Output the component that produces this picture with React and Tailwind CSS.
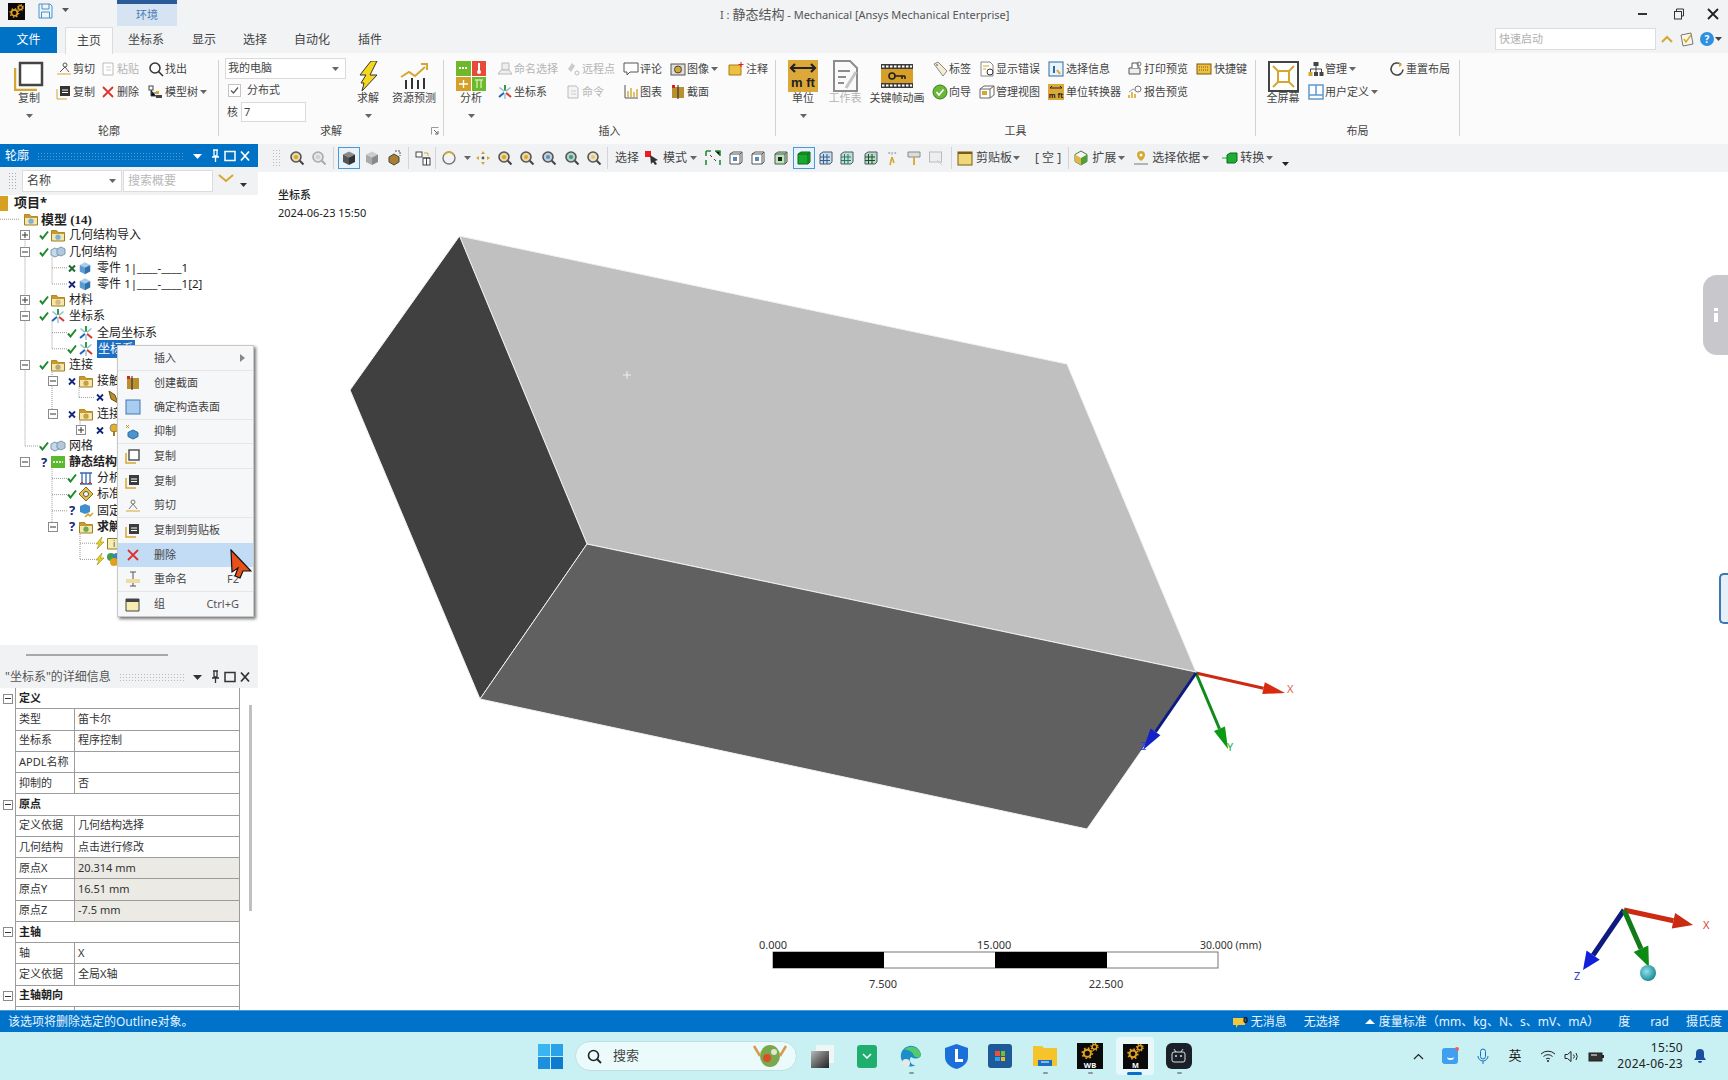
import React from 'react';

const S = ({ w = 16, h = 16, vb = '0 0 16 16', children }) => (
  <svg width={w} height={h} viewBox={vb} className="block shrink-0">{children}</svg>
);

const Caret = ({ c = '#666' }) => (
  <svg width="7" height="4" viewBox="0 0 7 4" className="block shrink-0"><path d="M0 0h7L3.5 4z" fill={c} /></svg>
);

// gears used by the app logo and the taskbar tiles
const Gears = ({ size = 18, letter }) => (
  <svg width={size} height={size} viewBox="0 0 24 24" className="block shrink-0">
    <rect width="24" height="24" fill="#0a0a0a" />
    <g transform={letter ? 'translate(2.5 -1.5) scale(.78)' : undefined}>
      <circle cx="9" cy="14" r="4.2" fill="none" stroke="#e0a020" strokeWidth="2.4" />
      <circle cx="9" cy="14" r="6" fill="none" stroke="#e0a020" strokeWidth="2" strokeDasharray="2 2.7" />
      <circle cx="17.5" cy="6.5" r="2.8" fill="none" stroke="#e0a020" strokeWidth="1.8" />
      <circle cx="17.5" cy="6.5" r="4.2" fill="none" stroke="#e0a020" strokeWidth="1.5" strokeDasharray="1.5 1.8" />
    </g>
    {letter && <text x="12" y="23" fontSize="7" fill="#fff" textAnchor="middle" fontWeight="700">{letter}</text>}
  </svg>
);

const CubeI = ({ t = '#a9cdea', l = '#5b9bd0', r = '#2f73ad', s = 16 }) => (
  <S w={s} h={s}>
    <path d="M8 1.5l6 3-6 3-6-3z" fill={t} />
    <path d="M2 4.5l6 3V15l-6-3z" fill={l} />
    <path d="M14 4.5l-6 3V15l6-3z" fill={r} />
  </S>
);

const Mag = ({ c = '#d9a520', dim }) => (
  <S>
    <circle cx="7" cy="7" r="5" fill={c} fillOpacity=".35" stroke={dim ? '#aaa' : '#555'} strokeWidth="1.6" />
    <circle cx="7" cy="7" r="2" fill={c} />
    <path d="M10.8 10.8L14.5 14.5" stroke={dim ? '#aaa' : '#444'} strokeWidth="2" />
  </S>
);

const Coord = () => (
  <S>
    <path d="M8 8L2.5 3.5M8 8l5.5-4.5" stroke="#8fbfd8" strokeWidth="1.6" />
    <path d="M8 8V1" stroke="#2e9e3e" strokeWidth="2" />
    <path d="M8 8l6 5" stroke="#d83a2a" strokeWidth="2" />
    <path d="M8 8l-6 5" stroke="#2563b8" strokeWidth="2" />
    <path d="M8 8v7" stroke="#8fbfd8" strokeWidth="1.4" />
    <circle cx="8" cy="8" r="1.5" fill="#fff" />
  </S>
);

const Folder = ({ c = '#7fb0d8' }) => (
  <S>
    <path d="M1.5 3.5h5l1.5 2h6.5V14h-13z" fill="#f3e7ad" stroke="#9a7c22" />
    <path d="M1.5 3.5h5l1.5 2h6.5v1.5h-13z" fill="#c89a2c" />
    <circle cx="8" cy="10.2" r="2.6" fill={c} />
  </S>
);

const Cubes = () => (
  <S>
    <path d="M1 6l4-2 4 2v5l-4 2-4-2z" fill="#c5d9ea" stroke="#7a98b2" />
    <path d="M7 5l4-2 4 2v5l-4 2-4-2z" fill="#b3c8da" stroke="#7a98b2" />
  </S>
);

const Mark = ({ m }) => {
  if (m === 'c') return <S w={10} h={10} vb="0 0 10 10"><path d="M1 5.5l2.5 3L9 1.5" fill="none" stroke="#1d8a2e" strokeWidth="2" /></S>;
  if (m === 'x') return <S w={10} h={10} vb="0 0 10 10"><path d="M2 2.5l6 6M8 2.5l-6 6" stroke="#14267e" strokeWidth="1.8" /></S>;
  if (m === 'cx') return <S w={10} h={10} vb="0 0 10 10"><path d="M2 2.5l6 6M8 2.5l-6 6" stroke="#1d6a2e" strokeWidth="2" /></S>;
  if (m === 'b') return <S w={10} h={12} vb="0 0 10 12"><path d="M7 0L1 7h3l-2 5 7-7H5.5z" fill="#e8d020" stroke="#8a7a10" strokeWidth=".5" /></S>;
  if (m === 'q') return <span className="block w-[10px] text-center text-[13px] leading-none font-bold text-[#14267e]">?</span>;
  return <span className="block w-[10px]" />;
};

const Exp = ({ e }) => {
  if (!e) return <span className="block w-[10px]" />;
  return (
    <span className="flex h-[10px] w-[10px] items-center justify-center border border-[#8a8a8a] bg-white">
      <svg width="8" height="8" viewBox="0 0 8 8" className="block">
        <path d={e === '+' ? 'M1 4h6M4 1v6' : 'M1 4h6'} stroke="#333" />
      </svg>
    </span>
  );
};

const INDENT = { 1: 'ml-[20px]', 2: 'ml-[48px]', 3: 'ml-[76px]' };

const P1 = <span className="text-[11.5px]">1|____-____1</span>;
const P2 = <span className="text-[11.5px]">1|____-____1[2]</span>;

const TREE = [
  { lv: 1, e: '+', m: 'c', ic: <Folder />, t: '几何结构导入' },
  { lv: 1, e: '-', m: 'c', ic: <Cubes />, t: '几何结构' },
  { lv: 2, m: 'cx', ic: <CubeI s={14} />, t: <>零件 {P1}</> },
  { lv: 2, m: 'x', ic: <CubeI s={14} />, t: <>零件 {P2}</> },
  { lv: 1, e: '+', m: 'c', ic: <Folder c="#d8b880" />, t: '材料' },
  { lv: 1, e: '-', m: 'c', ic: <Coord />, t: '坐标系' },
  { lv: 2, m: 'c', ic: <Coord />, t: '全局坐标系' },
  { lv: 2, m: 'c', ic: <Coord />, t: '坐标系', sel: true },
  { lv: 1, e: '-', m: 'c', ic: <Folder c="#b8a878" />, t: '连接' },
  { lv: 2, e: '-', m: 'x', ic: <Folder c="#c8a040" />, t: '接触' },
  { lv: 3, m: 'x', ic: <S><path d="M3 2l6 4 3 8-7-4z" fill="#b89030" stroke="#6a5010" /></S>, t: '' },
  { lv: 2, e: '-', m: 'x', ic: <Folder c="#c8a040" />, t: '连接' },
  { lv: 3, e: '+', m: 'x', ic: <S><circle cx="8" cy="6" r="4" fill="#e8b020" stroke="#888" /><path d="M8 9v5" stroke="#a08020" strokeWidth="2" /></S>, t: '' },
  { lv: 1, m: 'c', ic: <Cubes />, t: '网格' },
  { lv: 1, e: '-', m: 'q', ic: <S><rect x="1" y="2" width="14" height="12" fill="#5cb82e" /><path d="M3 8h10" stroke="#fff" strokeWidth="1.5" strokeDasharray="2 1" /></S>, t: '静态结构', b: true },
  { lv: 2, m: 'c', ic: <S><path d="M2 3h12M2 14h12M4 3v11M8 3v11M12 3v11" stroke="#3a6ab0" strokeWidth="1.3" /><path d="M2 14l2-2 2 2M10 14l2-2 2 2" stroke="#d03020" fill="none" /></S>, t: '分析设置' },
  { lv: 2, m: 'c', ic: <S><path d="M8 1l7 7-7 7-7-7z" fill="#e4bf50" stroke="#8a6a10" /><circle cx="8" cy="8" r="2.5" fill="#fff" stroke="#555" /></S>, t: '标准地球重力' },
  { lv: 2, m: 'q', ic: <S><path d="M2 3l5-2 5 2v6l-5 2-5-2z" fill="#3f8fd0" /><path d="M7 14l3-3 2 2 3-3" stroke="#d0a020" strokeWidth="1.5" fill="none" /></S>, t: '固定支撑' },
  { lv: 2, e: '-', m: 'q', ic: <Folder c="#6aaa50" />, t: '求解', b: true },
  { lv: 3, m: 'b', ic: <S><path d="M1.5 3.5h13V14h-13z" fill="#f6eeb0" stroke="#8a7c22" /><text x="8" y="12" fontSize="8" textAnchor="middle" fill="#336">i</text></S>, t: '' },
  { lv: 3, m: 'b', ic: <S><circle cx="5" cy="6" r="4" fill="#3aa04a" /><circle cx="11" cy="6" r="4" fill="#3a80c8" /><circle cx="8" cy="11" r="4" fill="#e0a020" /></S>, t: '' },
];

const rowY = (i) => 8 + 16.2 * i;

// dotted tree connectors, coordinates relative to the tree area
const Lines = () => {
  const d = [
    [25, rowY(2), 25, rowY(15)],
    [0, rowY(1), 20, rowY(1)],
    [52, rowY(3) + 5, 52, rowY(5)],
    [52, rowY(4), 68, rowY(4)],
    [52, rowY(5), 68, rowY(5)],
    [52, rowY(7) + 5, 52, rowY(9)],
    [52, rowY(8), 68, rowY(8)],
    [52, rowY(9), 68, rowY(9)],
    [52, rowY(10) + 5, 52, rowY(13)],
    [79, rowY(11) + 5, 79, rowY(12)],
    [79, rowY(12), 95, rowY(12)],
    [80, rowY(13) + 5, 80, rowY(14)],
    [52, rowY(16) + 5, 52, rowY(20)],
    [52, rowY(17), 68, rowY(17)],
    [52, rowY(18), 68, rowY(18)],
    [52, rowY(19), 68, rowY(19)],
    [80, rowY(20) + 5, 80, rowY(22)],
    [80, rowY(21), 95, rowY(21)],
    [80, rowY(22), 95, rowY(22)],
    [25, rowY(15), 40, rowY(15)],
  ];
  return (
    <svg width="258" height="450" className="pointer-events-none absolute left-0 top-0">
      {d.map((l, i) => (
        <line key={i} x1={l[0]} y1={l[1]} x2={l[2]} y2={l[3]} stroke="#9a9a9a" strokeDasharray="1 1" />
      ))}
    </svg>
  );
};

const MENU = [
  { t: '插入', arrow: true, sep: true },
  { t: '创建截面', ic: <S><rect x="2" y="3" width="12" height="11" fill="#b89030" /><path d="M7 1v14" stroke="#222" /><rect x="2" y="1" width="3" height="3" fill="#e02020" /></S> },
  { t: '确定构造表面', ic: <S><rect x="1" y="1" width="14" height="14" fill="#a9cdf0" stroke="#4078b0" /></S>, sep: true },
  { t: '抑制', ic: <S><path d="M8 6l5 2.5v4L8 15l-5-2.5v-4z" fill="#4f94cf" stroke="#2a6aa0" /><path d="M1 1l3 3M4 1L1 4" stroke="#c8941e" /></S>, sep: true },
  { t: '复制', ic: <S><path d="M1 5v10h10" fill="none" stroke="#d6a730" strokeWidth="1.5" /><rect x="4" y="2" width="10" height="10" fill="#fff" stroke="#555" strokeWidth="1.5" /></S>, sep: true },
  { t: '复制', ic: <S><path d="M1 5v10h10" fill="none" stroke="#d6a730" strokeWidth="1.5" /><rect x="4" y="2" width="10" height="10" fill="#3c3c3c" /><path d="M6 6h6M6 8.5h6" stroke="#fff" /></S> },
  { t: '剪切', ic: <S><circle cx="8" cy="5" r="2" fill="none" stroke="#777" /><path d="M8 7l-4 5M8 7l4 5" stroke="#777" /><path d="M1 14h14" stroke="#d6a730" /></S>, sep: true },
  { t: '复制到剪贴板', ic: <S><path d="M1 5v10h10" fill="none" stroke="#d6a730" strokeWidth="1.5" /><rect x="4" y="2" width="10" height="10" fill="#3c3c3c" /><path d="M6 6h6M6 8.5h6" stroke="#fff" /></S> },
  { t: '删除', hl: true, ic: <S><path d="M3 3l10 10M13 3L3 13" stroke="#e0312a" strokeWidth="1.8" /></S> },
  { t: '重命名', key: 'F2', ic: <S><path d="M8 1v14M5 1h6M5 15h6" stroke="#555" /><path d="M1 8h14v4H1z" fill="#f0dca0" /></S>, sep: true },
  { t: '组', key: 'Ctrl+G', ic: <S><path d="M1 3h13v12H1z" fill="#f5eeb0" stroke="#444" /><path d="M1 3h13v3H1z" fill="#444" /></S> },
];

const ContextMenu = () => (
  <div className="absolute left-[117px] top-[150px] h-[272px] w-[137px] border border-[#c8c8c8] bg-[#f6f7f8] shadow-[2px_2px_3px_#777]">
    {MENU.map((it, i) => (
      <div key={i} className={`flex h-[24.6px] items-center pl-[7px] pr-[14px] text-[11px] text-[#444] ${it.hl ? 'bg-[#c3dcf5]' : ''} ${it.sep ? 'border-b border-[#e6e6e6]' : ''}`}>
        <span className="flex w-[29px] shrink-0">{it.ic}</span>
        <span>{it.t}</span>
        {it.key && <span className="ml-auto text-[#555]">{it.key}</span>}
        {it.arrow && <svg width="5" height="8" viewBox="0 0 5 8" className="ml-auto -mr-[6px]"><path d="M0 0l5 4-5 4z" fill="#888" /></svg>}
      </div>
    ))}
  </div>
);

const PanelButtons = ({ c }) => (
  <svg width="58" height="14" viewBox="0 0 58 14" className="block shrink-0" fill="none" stroke={c}>
    <path d="M0 5h9L4.5 10z" fill={c} stroke="none" />
    <path d="M20 1h5M21 1v6h3V1M19 8h7M22.5 8v5" strokeWidth="1.3" />
    <rect x="32" y="2.5" width="10" height="9" strokeWidth="1.5" />
    <path d="M48 2.5l8 9M56 2.5l-8 9" strokeWidth="1.8" />
  </svg>
);

const OutlinePanel = () => (
  <>
    <div className="flex h-[23px] items-center bg-[#0072c6] pl-[5px] pr-[7px] text-[12px] text-white">
      <span>轮廓</span>
      <span className="mx-[8px] h-[8px] flex-1 bg-[radial-gradient(circle,#ffffff_0.6px,transparent_0.7px)] bg-[length:3px_3px] opacity-30" />
      <PanelButtons c="#ffffff" />
    </div>
    <div className="flex h-[28px] items-center bg-[#f1f2f4] pl-[8px]">
      <span className="h-[18px] w-[9px] bg-[radial-gradient(circle,#aaa_0.7px,transparent_0.8px)] bg-[length:3px_3px]" />
      <div className="ml-[5px] flex h-[22px] w-[100px] items-center justify-between border border-[#dcdcdc] bg-white pl-[4px] pr-[5px] text-[12px] text-[#444]">
        名称<Caret />
      </div>
      <div className="ml-[1px] flex h-[22px] w-[90px] items-center border border-[#dcdcdc] bg-white pl-[4px] text-[12px] text-[#b8b8b8]">搜索概要</div>
      <svg width="16" height="10" viewBox="0 0 16 10" className="ml-[5px] -mt-[6px] block"><path d="M1 2l7 6 7-6" fill="none" stroke="#d6a730" strokeWidth="2" /></svg>
      <span className="ml-[6px] mt-[8px]"><Caret c="#333" /></span>
    </div>
    <div className="relative h-[450px] bg-white text-[12px] text-[#222]">
      <Lines />
      <div className="relative flex h-[16.2px] items-center">
        <span className="h-[15px] w-[8px] bg-[#d6a020]" />
        <span className="ml-[6px] text-[13px] font-bold">项目*</span>
      </div>
      <div className="relative flex h-[16.2px] items-center pl-[23px]">
        <Folder />
        <span className="ml-[2px] font-['Liberation_Serif','Noto_Sans_CJK_SC',serif] text-[13px] font-bold">模型 (14)</span>
      </div>
      {TREE.map((r, i) => (
        <div key={i} className="relative flex h-[16.2px] items-center whitespace-nowrap">
          <span className={INDENT[r.lv]}><Exp e={r.e} /></span>
          <span className="ml-[9px] w-[11px]"><Mark m={r.m} /></span>
          <span className="w-[16px]">{r.ic}</span>
          <span className={`ml-[3px] ${r.b ? 'font-bold' : ''} ${r.sel ? 'bg-[#1c6fc4] px-[1px] text-white' : ''}`}>{r.t}</span>
        </div>
      ))}
      <ContextMenu />
      <svg width="24" height="30" viewBox="0 0 24 30" className="absolute left-[228px] top-[354px] block">
        <path d="M3 1l20 21-8 0-3 7-5-2 3-8-6 4z" fill="#e8521a" stroke="#111" strokeWidth="1.2" />
      </svg>
    </div>
    <div className="flex h-[20px] items-center bg-[#f1f2f4] pl-[26px]">
      <span className="h-[2px] w-[142px] bg-[#a8a8a8]" />
    </div>
  </>
);

const DETAILS = [
  { g: '定义' },
  { k: '类型', v: '笛卡尔' },
  { k: '坐标系', v: '程序控制' },
  { k: 'APDL名称', v: '' },
  { k: '抑制的', v: '否' },
  { g: '原点' },
  { k: '定义依据', v: '几何结构选择' },
  { k: '几何结构', v: '点击进行修改' },
  { k: '原点X', v: '20.314 mm', shade: true },
  { k: '原点Y', v: '16.51 mm', shade: true },
  { k: '原点Z', v: '-7.5 mm', shade: true },
  { g: '主轴' },
  { k: '轴', v: 'X' },
  { k: '定义依据', v: '全局X轴' },
  { g: '主轴朝向' },
  { k: '', v: '' },
];

const DetailsPanel = () => (
  <>
    <div className="flex h-[23px] items-center bg-[#f1f2f4] pl-[5px] pr-[7px] text-[12px] text-[#555]">
      <span>"坐标系"的详细信息</span>
      <span className="mx-[8px] h-[8px] flex-1 bg-[radial-gradient(circle,#bbb_0.6px,transparent_0.7px)] bg-[length:3px_3px]" />
      <PanelButtons c="#333333" />
    </div>
    <div className="flex min-h-0 flex-1 overflow-hidden bg-white text-[11px] text-[#333]">
      <div className="w-[240px] shrink-0">
        {DETAILS.map((r, i) => (
          <div key={i} className="flex h-[21.25px]">
            <div className="flex w-[15px] shrink-0 items-center justify-center">
              {r.g && (
                <span className="flex h-[10px] w-[10px] items-center justify-center border border-[#8a8a8a]">
                  <span className="h-px w-[6px] bg-[#333]" />
                </span>
              )}
            </div>
            {r.g ? (
              <div className="flex flex-1 items-center border-x border-b border-[#9c9c9c] pl-[3px] font-bold text-[#222] first:border-t">{r.g}</div>
            ) : (
              <div className="flex flex-1 border-x border-b border-[#9c9c9c]">
                <div className="flex w-[59px] shrink-0 items-center whitespace-nowrap border-r border-[#9c9c9c] pl-[3px]">{r.k}</div>
                <div className={`flex flex-1 items-center pl-[3px] ${r.shade ? 'bg-[#eceae5]' : ''}`}>{r.v}</div>
              </div>
            )}
          </div>
        ))}
      </div>
      <div className="ml-[9px] mt-[17px] h-[206px] w-[3px] bg-[#c0c0c0]" />
    </div>
  </>
);

const Sep = ({ h = 'h-[22px]', ml = 'ml-0' }) => <span className={`w-px shrink-0 bg-[#d4d4d4] ${h} ${ml}`} />;

const TI = ({ children, cls = '', sel }) => (
  <span className={`flex h-[22px] w-[22px] shrink-0 items-center justify-center ${sel ? 'border border-[#4a9ad8] bg-[#e8f2fb]' : ''} ${cls}`}>{children}</span>
);

const Tx = ({ children, cls = '' }) => <span className={`shrink-0 whitespace-nowrap text-[12px] text-[#444] ${cls}`}>{children}</span>;

const SelBox = ({ a = '#fff', b = '#5a8ab8', g }) => (
  <S>
    <path d="M2 4l3-2h9v10l-2 2H2z" fill={g ? '#19a82e' : a} stroke={g ? '#0c6a1a' : '#555'} />
    <path d="M2 4h10v10M12 4l2-2" fill="none" stroke={g ? '#0c6a1a' : '#555'} />
    {b && <rect x="5" y="7" width="4" height="4" fill={b} />}
  </S>
);

const Grid = ({ c, d }) => (
  <S>
    <path d="M2 4l3-2h9v10l-2 2H2z" fill={c} stroke="#4a5a6a" />
    <path d="M2 7h10M2 10.5h10M5.5 4v10M9 4v10" stroke={d} />
  </S>
);

const Toolbar = () => (
  <div className="flex h-[28px] items-center bg-[#f1f2f4] pl-[14px]">
    <span className="h-[18px] w-[9px] shrink-0 bg-[radial-gradient(circle,#bbb_0.7px,transparent_0.8px)] bg-[length:3px_3px]" />
    <TI cls="ml-[5px]"><Mag /></TI>
    <TI><Mag c="#cfcfcf" dim /></TI>
    <Sep ml="ml-[3px]" />
    <TI cls="ml-[4px]" sel><CubeI t="#8a8a8a" l="#555" r="#333" /></TI>
    <TI cls="ml-[1px]"><CubeI t="#ccc" l="#aaa" r="#8a8a8a" /></TI>
    <TI><S><path d="M3 7l5-3 5 3v5l-5 3-5-3z" fill="#a88030" stroke="#444" /><path d="M9 1h5v5" fill="none" stroke="#555" strokeDasharray="2 1" /></S></TI>
    <Sep ml="ml-[3px]" />
    <TI cls="ml-[3px]"><S><rect x="1" y="2" width="6" height="5" fill="#fff" stroke="#444" /><rect x="8" y="8" width="7" height="7" fill="#fff" stroke="#444" /><path d="M8 8h7M11.5 8v7" stroke="#444" /><path d="M9 3l4 0 0 3" stroke="#d6a730" fill="none" /></S></TI>
    <Sep ml="ml-[1px]" />
    <TI cls="ml-[2px]"><S><circle cx="8" cy="8" r="6" fill="none" stroke="#777" strokeWidth="1.4" /><path d="M3 5a6 6 0 0 1 10 0" fill="none" stroke="#d6a730" strokeWidth="1.6" /></S></TI>
    <span className="ml-[2px] flex w-[10px] shrink-0 justify-center"><Caret /></span>
    <TI><S><path d="M8 1l2 3H6zM8 15l-2-3h4zM1 8l3-2v4zM15 8l-3 2V6z" fill="#d6a730" /><circle cx="8" cy="8" r="1.4" fill="#555" /></S></TI>
    <TI><Mag /></TI>
    <TI><Mag c="#e0a820" /></TI>
    <TI><Mag c="#5f8fb8" /></TI>
    <TI cls="ml-[1px]"><Mag c="#3a9a7a" /></TI>
    <TI><Mag c="#e4c878" /></TI>
    <Sep ml="ml-[2px]" />
    <Tx cls="ml-[7px]">选择</Tx>
    <TI cls="ml-[2px]"><S><rect x="1" y="1" width="6" height="6" fill="#ee1c1c" /><path d="M6 5l8 5-3 1 2 3-2 1-2-3-2 2z" fill="#333" /></S></TI>
    <Tx>模式</Tx>
    <span className="ml-[2px] flex w-[8px] shrink-0 justify-center"><Caret /></span>
    <TI cls="ml-[5px]"><S><path d="M1 1h5M1 1v5M10 1h5v5M1 10v5M15 10v5" stroke="#2a8a3a" strokeWidth="1.6" /><path d="M5 5l2 2M9 9l2 2" stroke="#444" /></S></TI>
    <TI cls="ml-px"><SelBox /></TI>
    <TI><SelBox /></TI>
    <TI cls="ml-px"><SelBox b="#222" a="#b8e8b8" /></TI>
    <TI cls="ml-px" sel><SelBox g b="" /></TI>
    <TI><Grid c="#c9ddef" d="#35618f" /></TI>
    <TI cls="-ml-px"><Grid c="#bfe0d6" d="#2a7a5a" /></TI>
    <TI cls="ml-[2px]"><Grid c="#bcd8c4" d="#14532d" /></TI>
    <TI cls="-ml-px"><S><path d="M8 7l-2 8M8 7l2 6" stroke="#d6a730" strokeWidth="1.6" /><text x="8" y="4" fontSize="4" fill="#666" textAnchor="middle">x y z</text></S></TI>
    <TI><S><path d="M2 2h12v5H2z" fill="#ddd" stroke="#888" /><path d="M8 7v8" stroke="#d6a730" strokeWidth="1.8" /></S></TI>
    <TI><S><rect x="1.5" y="2" width="12" height="10" fill="#eee" stroke="#bbb" /><path d="M9 10l5 5" stroke="#ccc" /></S></TI>
    <Sep ml="ml-[4px]" />
    <span className="ml-[5px] flex w-[16px] shrink-0"><S><rect x="1" y="2" width="14" height="13" fill="#f0d878" stroke="#7a5a10" /><path d="M1 2h14v2H1z" fill="#7a5a10" /></S></span>
    <Tx cls="ml-[3px]">剪贴板</Tx>
    <span className="ml-[1px]"><Caret /></span>
    <Tx cls="ml-[15px]">[ 空 ]</Tx>
    <Sep ml="ml-[7px]" />
    <span className="ml-[4px] flex"><S><path d="M8 1l6 3.5v7L8 15l-6-3.5v-7z" fill="#f5f5f5" stroke="#4a7a3a" /><path d="M8 8l6-3.5v7L8 15z" fill="#4f9f3e" /><path d="M2 4.5L8 8v7l-6-3.5z" fill="#e0b840" /></S></span>
    <Tx cls="ml-[3px]">扩展</Tx>
    <span className="ml-[2px]"><Caret /></span>
    <span className="ml-[8px] flex"><S><path d="M8 1a4 4 0 0 1 4 4c0 3-4 6-4 6s-4-3-4-6a4 4 0 0 1 4-4z" fill="#d6a730" /><circle cx="8" cy="5" r="1.5" fill="#fff" /><path d="M1 14h14" stroke="#777" /></S></span>
    <Tx cls="ml-[3px]">选择依据</Tx>
    <span className="ml-[2px]"><Caret /></span>
    <span className="ml-[13px] flex"><S><path d="M0 8h5" stroke="#2aa83a" /><path d="M5 5l3-2h7v8l-2 2H5z" fill="#1fae34" stroke="#0c6a1a" /></S></span>
    <Tx cls="ml-[2px]">转换</Tx>
    <span className="ml-[2px]"><Caret /></span>
    <span className="ml-[9px] mt-[12px]"><Caret c="#222" /></span>
  </div>
);

const Arrow = ({ x1, y1, x2, y2, line, head, w = 3, hw = 6, hl = 22 }) => {
  const len = Math.hypot(x2 - x1, y2 - y1);
  const ux = (x2 - x1) / len;
  const uy = (y2 - y1) / len;
  const bx = x2 - ux * hl;
  const by = y2 - uy * hl;
  const pts = `${bx - uy * hw},${by + ux * hw} ${bx + uy * hw},${by - ux * hw} ${x2},${y2}`;
  return (
    <g>
      <line x1={x1} y1={y1} x2={bx} y2={by} stroke={line} strokeWidth={w} />
      <polygon points={pts} fill={head} />
    </g>
  );
};

const Scene = () => (
  <svg width="1466" height="838" viewBox="262 172 1466 838" className="absolute left-0 top-0 block">
    <defs>
      <radialGradient id="ball" cx=".4" cy=".4" r=".7">
        <stop offset="0" stopColor="#8fe0e8" />
        <stop offset="1" stopColor="#0c7f8c" />
      </radialGradient>
    </defs>
    <polygon points="459.5,236 1067,364 1196,672 587,544" fill="#c0c0c0" stroke="#f2f2f2" />
    <polygon points="459.5,236 587,544 480,699 350,390" fill="#404040" stroke="#f2f2f2" />
    <polygon points="587,544 1196,672 1087,829 480,699" fill="#606060" stroke="#f2f2f2" />
    <path d="M623 375h8M627 371v8" stroke="#f0f0f0" />

    <Arrow x1={1196} y1={673} x2={1285} y2={693} line="#cc2a12" head="#d92a10" />
    <Arrow x1={1196} y1={673} x2={1228} y2={749} line="#118a18" head="#0c9a14" />
    <Arrow x1={1196} y1={673} x2={1143} y2={750} line="#0d1a80" head="#1420c8" />
    <text x="1287" y="693" fontSize="11" fill="#e06050">X</text>
    <text x="1227" y="751" fontSize="11" fill="#30b040">Y</text>
    <text x="1140" y="750" fontSize="11" fill="#3040d0">Z</text>

    <rect x="773" y="952" width="445" height="16" fill="#fff" stroke="#777" />
    <rect x="773" y="952" width="111" height="16" fill="#000" />
    <rect x="995" y="952" width="112" height="16" fill="#000" />
    <g fontSize="11" fill="#333" fontFamily="Noto Sans">
      <text x="759" y="949">0.000</text>
      <text x="977" y="949">15.000</text>
      <text x="1200" y="949" fontSize="10.5">30.000 (mm)</text>
      <text x="883" y="988" textAnchor="middle">7.500</text>
      <text x="1106" y="988" textAnchor="middle">22.500</text>
    </g>

    <Arrow x1={1624} y1={910} x2={1693} y2={925} line="#cc2a12" head="#c92a10" w={5} hw={8} hl={20} />
    <Arrow x1={1624} y1={910} x2={1583} y2={970} line="#0d1a80" head="#1420d8" w={5} hw={8} hl={18} />
    <Arrow x1={1624} y1={910} x2={1649} y2={967} line="#127a18" head="#0c8a14" w={5} hw={8} hl={20} />
    <circle cx="1648" cy="973" r="8" fill="url(#ball)" />
    <text x="1703" y="929" fontSize="11" fill="#e04030">X</text>
    <text x="1574" y="980" fontSize="11" fill="#3040c0">Z</text>
  </svg>
);

const Canvas = () => (
  <div className="relative min-h-0 flex-1 overflow-hidden bg-white pl-[16px] pt-[14px] text-[11px] leading-[18px] text-[#222]">
    <Scene />
    <div className="relative font-medium">坐标系</div>
    <div className="relative">2024-06-23 15:50</div>
    <div className="absolute right-0 top-[103px] flex h-[80px] w-[25px] items-center justify-center rounded-l-[14px] bg-[#c8c8cc]">
      <span className="flex flex-col items-center gap-[2px]">
        <span className="h-[3px] w-[4px] bg-white" />
        <span className="h-[9px] w-[4px] bg-white" />
      </span>
    </div>
    <div className="absolute right-0 top-[401px] h-[51px] w-[9px] rounded-l-[5px] border-y-2 border-l-2 border-[#3d78b5] bg-[#e6f0fa]" />
  </div>
);

// ribbon parts
const Large = ({ ic, t, cls, dim, arrow = true }) => (
  <div className={`flex shrink-0 flex-col items-center ${cls}`}>
    <div className="flex h-[30px] items-center justify-center">{ic}</div>
    <div className={`mt-[-1px] h-[16px] whitespace-nowrap text-[11px] leading-[16px] ${dim ? 'text-[#b4b4b4]' : 'text-[#444]'}`}>{t}</div>
    {arrow && <div className="mt-[8px]"><Caret /></div>}
  </div>
);

const Small = ({ ic, t, dim, caret, gap = 'gap-[1px]' }) => (
  <div className={`flex h-[16px] items-center whitespace-nowrap text-[11px] ${gap} ${dim ? 'text-[#b4b4b4]' : 'text-[#444]'}`}>
    <span className="flex w-[16px] shrink-0 justify-center">{ic}</span>
    <span>{t}</span>
    {caret && <span className="ml-[1px]"><Caret /></span>}
  </div>
);

const Col = ({ cls, children }) => <div className={`flex shrink-0 flex-col gap-[7px] ${cls}`}>{children}</div>;

const Group = ({ w, label, children, launcher }) => (
  <>
    <div className={`relative flex shrink-0 flex-col ${w}`}>
      <div className="flex h-[70px] pt-[8px]">{children}</div>
      <div className="h-[16px] text-center text-[11px] leading-[16px] text-[#444]">{label}</div>
      {launcher && (
        <svg width="8" height="8" viewBox="0 0 8 8" className="absolute bottom-[9px] right-[4px] block">
          <path d="M0.5 7.5V.5h7" fill="none" stroke="#999" />
          <path d="M3 3l4 4M7 4v3H4" fill="none" stroke="#666" />
        </svg>
      )}
    </div>
    <span className="mb-[8px] mt-[7px] w-px shrink-0 self-stretch bg-[#d2d2d2]" />
  </>
);

const CopyLg = (
  <S w={30} h={30} vb="0 0 30 30">
    <path d="M1 7v22h22" fill="none" stroke="#d6a730" strokeWidth="2.5" />
    <rect x="6" y="2" width="22" height="22" fill="#fff" stroke="#444" strokeWidth="2.5" />
  </S>
);
const BoltLg = (
  <S w={22} h={30} vb="0 0 22 30">
    <path d="M14 0L3 14h6L4 22l3 0-2 8L20 14h-7l7-14z" fill="#f4d820" stroke="#333" strokeWidth="1" />
  </S>
);
const ChartLg = (
  <S w={30} h={30} vb="0 0 30 30">
    <path d="M2 16l8-5 6 4 10-9" fill="none" stroke="#d6a730" strokeWidth="2" />
    <path d="M22 3h6v6" fill="none" stroke="#d6a730" strokeWidth="2" />
    <path d="M7 28V19M13 28V17M19 28V19M25 28V17" stroke="#333" strokeWidth="2" />
  </S>
);
const AnalysisLg = (
  <S w={30} h={30} vb="0 0 30 30">
    <rect x="0" y="0" width="15" height="15" fill="#6eb82c" />
    <rect x="16" y="0" width="14" height="15" fill="#e84a3a" />
    <rect x="0" y="16" width="15" height="14" fill="#d6a028" />
    <rect x="16" y="16" width="14" height="14" fill="#6eb82c" />
    <path d="M3 7h9" stroke="#fff" strokeWidth="2" strokeDasharray="2 1" />
    <path d="M23 2v8" stroke="#fff" strokeWidth="2" /><circle cx="23" cy="11" r="2" fill="#fff" />
    <path d="M3 23h9M7.5 19v8" stroke="#fff" strokeWidth="1.4" />
    <path d="M19 19h8M21 19v8M25 19v8" stroke="#c8e8a8" strokeWidth="1.4" />
  </S>
);
const UnitLg = (
  <S w={30} h={32} vb="0 0 30 32">
    <rect width="30" height="32" fill="#dca83a" />
    <path d="M3 8h24M7 4L3 8l4 4M23 4l4 4-4 4" fill="none" stroke="#222" strokeWidth="2.2" />
    <text x="15" y="27" fontSize="13" fontWeight="700" textAnchor="middle" fill="#222" fontFamily="Liberation Sans">m ft</text>
  </S>
);
const SheetLg = (
  <S w={27} h={32} vb="0 0 27 32">
    <path d="M2 1h16l7 7v23H2z" fill="#fafafa" stroke="#8c8c8c" strokeWidth="2" />
    <path d="M6 11h12M6 17h8M6 23h6" stroke="#8c8c8c" strokeWidth="2" />
    <path d="M24 12L14 28" stroke="#c4c4c4" strokeWidth="3" />
  </S>
);
const KeyLg = (
  <S w={32} h={24} vb="0 0 32 24">
    <rect width="32" height="24" fill="#3c3c3c" />
    <rect y="5" width="32" height="14" fill="#d6a028" />
    <path d="M1 2.5h30M1 21.5h30" stroke="#fff" strokeWidth="2" strokeDasharray="2.5 1.5" />
    <circle cx="11" cy="12" r="3" fill="none" stroke="#222" strokeWidth="1.6" />
    <path d="M14 12h10M21 12v3M24 12v3" stroke="#222" strokeWidth="1.6" />
  </S>
);
const FullLg = (
  <S w={31} h={31} vb="0 0 31 31">
    <rect x="1" y="1" width="29" height="29" fill="#fff" stroke="#444" strokeWidth="2" />
    <rect x="10" y="10" width="11" height="11" fill="none" stroke="#d6a730" strokeWidth="2" />
    <path d="M10 10L5 5M21 10l5-5M10 21l-5 5M21 21l5 5" stroke="#d6a730" strokeWidth="2" />
  </S>
);

const Ribbon = () => (
  <div className="flex h-[91px] shrink-0 bg-[#fbfbfb]">
    <Group w="w-[218px]" label="轮廓">
      <Large cls="ml-[8px] w-[42px]" ic={CopyLg} t="复制" />
      <Col cls="ml-[6px] w-[44px]">
        <Small t="剪切" ic={<S><circle cx="9" cy="4" r="2" fill="none" stroke="#555" /><path d="M9 6L4 11M9 6l4 5" stroke="#555" /><path d="M1 13h14" stroke="#d6a730" /></S>} />
        <Small t="复制" ic={<S><path d="M1 5v10h10" fill="none" stroke="#d6a730" /><rect x="4" y="2" width="10" height="10" fill="#333" /><path d="M6 6h6M6 8.5h6" stroke="#fff" /></S>} />
      </Col>
      <Col cls="w-[48px]">
        <Small dim t="粘贴" ic={<S><path d="M3 2h10v12H3z" fill="#fff" stroke="#bbb" /><path d="M6 6h5M6 9h5" stroke="#ccc" /></S>} />
        <Small t="删除" ic={<S><path d="M3 3l10 10M13 3L3 13" stroke="#e0312a" strokeWidth="1.8" /></S>} />
      </Col>
      <Col cls="w-[60px]">
        <Small t="找出" ic={<S><circle cx="7" cy="7" r="5" fill="none" stroke="#333" strokeWidth="1.5" /><path d="M10.5 10.5L15 15" stroke="#333" strokeWidth="1.6" /></S>} />
        <Small caret t="模型树" ic={<S><rect x="1" y="2" width="4" height="4" fill="#fff" stroke="#444" /><path d="M3 6v6h5M3 9h5" stroke="#444" /><rect x="8" y="7" width="3" height="3" fill="#d6a730" /><rect x="8" y="11" width="6" height="3" fill="#444" /></S>} />
      </Col>
    </Group>
    <Group w="w-[224px]" label="求解" launcher>
      <div className="ml-[6px] -mt-[3px] w-[121px] shrink-0 text-[11px] text-[#444]">
        <div className="flex h-[21px] items-center justify-between border border-[#dadada] bg-white pl-[2px] pr-[6px]">
          我的电脑<Caret />
        </div>
        <div className="mt-[4px] flex h-[14px] items-center pl-[3px]">
          <span className="flex h-[13px] w-[13px] items-center justify-center border border-[#c4c4c4] bg-white">
            <svg width="9" height="9" viewBox="0 0 9 9" className="block"><path d="M1 4.5l2.5 2.5L8 1.5" fill="none" stroke="#555" strokeWidth="1.2" /></svg>
          </span>
          <span className="ml-[6px]">分布式</span>
        </div>
        <div className="mt-[5px] flex h-[20px] items-center pl-[2px]">
          <span>核</span>
          <span className="ml-[3px] flex h-[20px] w-[65px] items-center border border-[#dadada] bg-white pl-[2px]">7</span>
        </div>
      </div>
      <Large cls="ml-[4px] w-[36px]" ic={BoltLg} t="求解" />
      <Large cls="ml-[4px] w-[48px]" ic={ChartLg} t="资源预测" arrow={false} />
    </Group>
    <Group w="w-[331px]" label="插入">
      <Large cls="ml-[10px] w-[34px]" ic={AnalysisLg} t="分析" />
      <Col cls="ml-[9px] w-[68px]">
        <Small dim t="命名选择" ic={<S><path d="M5 2h7v7H5z" fill="#eee" stroke="#bbb" /><path d="M1 13l3-4h8l3 4z" fill="#eee" stroke="#bbb" /></S>} />
        <Small t="坐标系" ic={<Coord />} />
      </Col>
      <Col cls="w-[58px]">
        <Small dim t="远程点" ic={<S><path d="M3 8l4-6 3 3-4 6z" fill="#ccc" /><circle cx="12" cy="12" r="2" fill="none" stroke="#bbb" /></S>} />
        <Small dim t="命令" ic={<S><path d="M3 2h8l2 2v10H3z" fill="#f4f4f4" stroke="#bbb" /><path d="M6 7h5M6 10h5" stroke="#ccc" /></S>} />
      </Col>
      <Col cls="w-[47px]">
        <Small t="评论" ic={<S><path d="M1 2h14v9H7l-3 3v-3H1z" fill="#fff" stroke="#555" /></S>} />
        <Small t="图表" ic={<S><path d="M2 1v13h13" fill="none" stroke="#555" /><path d="M5 13V7M8 13V4M11 13V8M14 13V5" stroke="#d6a730" strokeWidth="1.4" /></S>} />
      </Col>
      <Col cls="w-[58px]">
        <Small caret t="图像" ic={<S><rect x="1" y="3" width="14" height="11" fill="#ddd" stroke="#555" /><circle cx="8" cy="8.5" r="3.5" fill="#d6a730" stroke="#444" /></S>} />
        <Small t="截面" ic={<S><rect x="2" y="3" width="12" height="11" fill="#b89030" /><path d="M8 1v14" stroke="#222" /><rect x="2" y="1" width="3" height="3" fill="#e02020" /></S>} />
      </Col>
      <Col cls="w-[40px]">
        <Small t="注释" gap="gap-[2px]" ic={<S><path d="M1 4h12v10H1z" fill="#eec040" stroke="#a87c10" /><path d="M13 1v5M10.5 3.5h5" stroke="#e02020" /></S>} />
      </Col>
    </Group>
    <Group w="w-[479px]" label="工具">
      <Large cls="ml-[12px] w-[30px]" ic={UnitLg} t="单位" />
      <Large dim cls="ml-[7px] w-[40px]" ic={SheetLg} t="工作表" arrow={false} />
      <Large cls="ml-[2px] w-[60px]" ic={KeyLg} t="关键帧动画" arrow={false} />
      <Col cls="ml-[5px] w-[47px]">
        <Small t="标签" ic={<S><path d="M2 3l4-2 9 9-4 5z" fill="#f5ecd0" stroke="#888" /><circle cx="5" cy="4" r="1" fill="#888" /></S>} />
        <Small t="向导" ic={<S><circle cx="8" cy="8" r="7" fill="#6ab83a" stroke="#3a8020" /><path d="M4.5 8l2.5 3 4.5-5.5" fill="none" stroke="#fff" strokeWidth="1.6" /></S>} />
      </Col>
      <Col cls="w-[69px]">
        <Small t="显示错误" ic={<S><path d="M2 1h9l3 3v11H2z" fill="#fff" stroke="#888" /><path d="M4 5h6M4 8h3" stroke="#d6a730" /><circle cx="11" cy="11" r="3" fill="#fff" stroke="#333" /></S>} />
        <Small t="管理视图" ic={<S><path d="M1 5l4-3h10v9l-4 3H1z" fill="#fff" stroke="#666" /><path d="M1 5h10v9M11 5l4-3" fill="none" stroke="#666" /><rect x="3" y="7" width="5" height="4" fill="#d6a730" /></S>} />
      </Col>
      <Col cls="w-[79px]">
        <Small gap="gap-[2px]" t="选择信息" ic={<S><rect x="1" y="1" width="14" height="14" fill="#e8f2fb" stroke="#2a6aa0" /><path d="M6 5v7" stroke="#2a6aa0" strokeWidth="2" /><path d="M9 9l3 4" stroke="#d6a730" strokeWidth="2" /></S>} />
        <Small gap="gap-[2px]" t="单位转换器" ic={<S><rect x="0" y="0" width="16" height="16" fill="#dca83a" /><path d="M2 4h12M2 4l2-2M14 4l-2-2" stroke="#222" /><text x="8" y="14" fontSize="7" textAnchor="middle" fontWeight="700" fill="#222">m ft</text></S>} />
      </Col>
      <Col cls="w-[69px]">
        <Small t="打印预览" ic={<S><path d="M2 7h11v6H2z" fill="#eee" stroke="#555" /><path d="M5 7V2h6v5" fill="#fff" stroke="#555" /><circle cx="12" cy="3" r="2" fill="none" stroke="#777" /></S>} />
        <Small t="报告预览" ic={<S><path d="M2 14V11M5 14V8M8 14V10" stroke="#d6a730" strokeWidth="1.6" /><circle cx="11" cy="5" r="3" fill="none" stroke="#777" /><path d="M2 8l4-3 3 2" stroke="#999" fill="none" /></S>} />
      </Col>
      <Col cls="w-[50px]">
        <Small gap="gap-[2px]" t="快捷键" ic={<S><rect x="1" y="3" width="14" height="10" fill="#eec040" stroke="#7a5a10" /><path d="M3 6h10M3 9h10" stroke="#7a5a10" strokeDasharray="1 1" /></S>} />
      </Col>
    </Group>
    <Group w="w-[203px]" label="布局">
      <Large cls="ml-[7px] w-[40px]" ic={FullLg} t="全屏幕" arrow={false} />
      <Col cls="ml-[5px] w-[81px]">
        <Small caret t="管理" ic={<S><rect x="5.5" y="1" width="5" height="4" fill="#444" /><path d="M8 5v3M2.5 11V8h11v3M8 8v3" fill="none" stroke="#444" /><rect x="0.5" y="11" width="4" height="4" fill="#d6a730" /><rect x="6" y="11" width="4" height="4" fill="#444" /><rect x="11.5" y="11" width="4" height="4" fill="#444" /></S>} />
        <Small caret t="用户定义" ic={<S><rect x="1" y="1" width="14" height="14" fill="#fff" stroke="#5b9bd0" strokeWidth="1.5" /><path d="M1 11h14M8 1v10" stroke="#5b9bd0" strokeWidth="1.5" /></S>} />
      </Col>
      <Col cls="w-[60px]">
        <Small t="重置布局" ic={<S><path d="M12 3.5a6 6 0 1 0 2 5" fill="none" stroke="#444" strokeWidth="1.6" /><path d="M10 1l3 3-3 2z" fill="#d6a730" /></S>} />
      </Col>
    </Group>
  </div>
);

const TABS = [
  { t: '坐标系', w: 'w-[66px]' },
  { t: '显示', w: 'w-[50px]' },
  { t: '选择', w: 'w-[52px]' },
  { t: '自动化', w: 'w-[62px]' },
  { t: '插件', w: 'w-[54px]' },
];

const TitleBar = () => (
  <div className="flex h-[27px] shrink-0 items-start bg-[#f1f3f5]">
    <span className="ml-[8px] mt-[3px]"><Gears size={17} /></span>
    <svg width="15" height="16" viewBox="0 0 15 16" className="ml-[13px] mt-[3px] block shrink-0">
      <path d="M1 1h11l2 2v12H1z" fill="#eef5fb" stroke="#4a90c8" />
      <path d="M4 1v5h7V1M3.5 15v-6h8v6" fill="none" stroke="#4a90c8" />
    </svg>
    <span className="ml-[9px] mt-[8px]"><Caret c="#555" /></span>
    <div className="ml-[48px] h-[26px] w-[60px] border-t-[4px] border-[#2a5a98] bg-[#d5e3f3] text-center text-[11px] leading-[22px] text-[#4a7ab0]">环境</div>
    <div className="ml-[543px] mt-[5px] whitespace-nowrap text-[11px] leading-[18px] text-[#555]">
      I : <span className="text-[13px]">静态结构</span> - Mechanical [Ansys Mechanical Enterprise]
    </div>
    <div className="ml-auto mr-[9px] mt-[8px] flex items-center">
      <span className="h-[2px] w-[9px] bg-[#333]" />
      <svg width="12" height="12" viewBox="0 0 12 12" className="ml-[26px] block"><path d="M3.5 3V1h7v7H8.5" fill="none" stroke="#333" /><rect x="1.5" y="3.5" width="7" height="7.5" fill="none" stroke="#333" /></svg>
      <svg width="12" height="12" viewBox="0 0 12 12" className="ml-[22px] block"><path d="M1 1l10 10M11 1L1 11" stroke="#222" strokeWidth="1.8" /></svg>
    </div>
  </div>
);

const TabRow = () => (
  <div className="flex h-[26px] shrink-0 items-stretch bg-[#f1f3f5] text-[12px] text-[#444]">
    <div className="flex w-[57px] items-center justify-center bg-[#0072c6] text-white">文件</div>
    <div className="z-10 ml-[8px] flex h-[27px] w-[48px] items-center justify-center border-x border-t border-[#dcdcdc] bg-[#fbfbfb]">主页</div>
    {TABS.map((t) => (
      <div key={t.t} className={`flex items-center justify-center ${t.w}`}>{t.t}</div>
    ))}
    <div className="ml-auto mr-[6px] mt-px flex h-[22px] items-center">
      <div className="flex h-[22px] w-[161px] items-center border border-[#dcdcdc] bg-white pl-[3px] text-[11px] text-[#b0b0b0]">快速启动</div>
      <svg width="12" height="8" viewBox="0 0 12 8" className="ml-[5px] block"><path d="M1 7l5-5 5 5" fill="none" stroke="#d6a730" strokeWidth="2" /></svg>
      <svg width="14" height="15" viewBox="0 0 14 15" className="ml-[7px] block"><path d="M1 3l10-2 2 11-10 2z" fill="#faf6e6" stroke="#777" /><path d="M4 7l2 3 5-7" fill="none" stroke="#d6a730" strokeWidth="1.4" /></svg>
      <span className="ml-[6px] flex h-[14px] w-[14px] items-center justify-center rounded-full bg-[#2f8fe0] text-[10px] font-bold leading-none text-white">?</span>
      <span className="ml-[1px]"><Caret c="#444" /></span>
    </div>
  </div>
);

const Dot = ({ ml = 'ml-0', children, w }) => (
  <div className={`relative flex h-full shrink-0 items-center justify-center ${ml} ${w}`}>
    {children}
    <span className="absolute bottom-[6px] h-[2px] w-[5px] rounded-full bg-[#8a9a9c]" />
  </div>
);

const TaskBar = () => (
  <div className="flex h-[48px] shrink-0 items-center bg-[#c9f1f3] text-[#222]">
    <svg width="25" height="25" viewBox="0 0 25 25" className="ml-[538px] block shrink-0">
      <rect width="12" height="12" fill="#3bb4f2" />
      <rect x="13" width="12" height="12" fill="#28a3ea" />
      <rect y="13" width="12" height="12" fill="#1d8fdf" />
      <rect x="13" y="13" width="12" height="12" fill="#0d7bd0" />
    </svg>
    <div className="ml-[12px] flex h-[30px] w-[222px] shrink-0 items-center rounded-full border border-[#bfe0e2] bg-[#ebfbfc] pl-[11px] pr-[6px] text-[13px] text-[#444]">
      <svg width="15" height="15" viewBox="0 0 15 15" className="block shrink-0"><circle cx="6.5" cy="6.5" r="5" fill="none" stroke="#222" strokeWidth="1.6" /><path d="M10 10l4 4" stroke="#222" strokeWidth="1.8" /></svg>
      <span className="ml-[11px]">搜索</span>
      <svg width="40" height="26" viewBox="0 0 40 26" className="ml-auto block shrink-0">
        <ellipse cx="20" cy="13" rx="10" ry="11" fill="#7aa84a" />
        <circle cx="17" cy="15" r="4" fill="#d8502a" />
        <circle cx="24" cy="9" r="3" fill="#e4e4d8" />
        <path d="M4 3l6 10M36 3l-6 10" stroke="#d89a50" strokeWidth="2.5" />
      </svg>
    </div>
    <div className="ml-[14px] flex h-[23px] w-[23px] shrink-0 items-end">
      <div className="relative h-[23px] w-[23px]">
        <span className="absolute right-0 top-0 h-[18px] w-[18px] bg-[#f0f5f5]" />
        <span className="absolute bottom-0 left-0 h-[17px] w-[18px] bg-gradient-to-br from-[#bbb] to-[#222]" />
      </div>
    </div>
    <div className="ml-[23px] flex h-[23px] w-[20px] shrink-0 items-center justify-center rounded-[3px] bg-[#1fae6e]">
      <svg width="10" height="6" viewBox="0 0 10 6" className="block"><path d="M1 1l4 4 4-4" fill="none" stroke="#fff" strokeWidth="1.5" /></svg>
    </div>
    <Dot ml="ml-[22px]" w="w-[24px]">
      <svg width="24" height="24" viewBox="0 0 24 24" className="block">
        <path d="M2 14A10 10 0 0 1 22 10C22 16 14 15 12 13a5 5 0 0 0 5 8 10 10 0 0 1-15-7z" fill="#1c8fc8" />
        <path d="M5 6a10 10 0 0 1 17 5c0 3-5 3-7 1 0-3-6-7-10-6z" fill="#52c96a" />
        <circle cx="7" cy="19" r="4" fill="#e8e8e8" />
      </svg>
    </Dot>
    <div className="ml-[22px] flex h-[24px] w-[23px] shrink-0 items-center justify-center">
      <svg width="23" height="25" viewBox="0 0 23 25" className="block">
        <path d="M11.5 0L23 4v9c0 6-5 10-11.5 12C5 23 0 19 0 13V4z" fill="#1a6fd8" />
        <path d="M10 5h3v10h5v3h-8z" fill="#fff" />
      </svg>
    </div>
    <div className="relative ml-[20px] h-[24px] w-[24px] shrink-0 rounded-[3px] bg-[#1e5a9a]">
      <span className="absolute left-[7px] top-[7px] grid h-[10px] w-[10px] grid-cols-2 gap-px">
        <span className="bg-[#ef5030]" /><span className="bg-[#70c030]" /><span className="bg-[#30a0e8]" /><span className="bg-[#f0b820]" />
      </span>
    </div>
    <Dot ml="ml-[21px]" w="w-[24px]">
      <svg width="24" height="24" viewBox="0 0 24 24" className="block">
        <path d="M0 2h9l2 2h13v18H0z" fill="#f4c42c" />
        <rect x="5" y="16" width="14" height="6" fill="#1a6fc4" />
        <path d="M8 18h8" stroke="#fff" />
      </svg>
    </Dot>
    <Dot ml="ml-[20px]" w="w-[26px]">
      <Gears size={26} letter="WB" />
    </Dot>
    <div className="relative ml-[13px] flex h-[38px] w-[38px] shrink-0 items-center justify-center rounded-[4px] bg-[#e8f8fa]">
      <Gears size={25} letter="M" />
      <span className="absolute bottom-0 left-[11px] h-[3px] w-[15px] rounded-full bg-[#0a6fc8]" />
    </div>
    <Dot ml="ml-[12px]" w="w-[26px]">
      <div className="flex h-[26px] w-[26px] items-center justify-center rounded-[6px] bg-[#1a2028]">
        <svg width="18" height="16" viewBox="0 0 18 16" className="block"><rect x="2" y="4" width="13" height="10" rx="2" fill="none" stroke="#ddd" /><path d="M6 4L4 1M11 4l2-3" stroke="#ddd" /><circle cx="6" cy="8" r="1" fill="#ddd" /><circle cx="11" cy="8" r="1" fill="#ddd" /></svg>
      </div>
    </Dot>
    <div className="ml-auto mr-[20px] flex shrink-0 items-center">
      <span className="flex w-[20px] justify-center">
        <svg width="11" height="7" viewBox="0 0 11 7" className="block"><path d="M1 6l4.5-4.5L10 6" fill="none" stroke="#222" strokeWidth="1.2" /></svg>
      </span>
      <span className="ml-[10px] flex w-[24px] justify-center">
        <span className="relative flex h-[16px] w-[16px] items-center justify-center rounded-[3px] bg-[#3f9ff0]">
          <span className="h-[7px] w-[7px] rounded-full border-b-2 border-white" />
          <span className="absolute -right-[1px] -top-[1px] h-[4px] w-[4px] rounded-full bg-[#e86060]" />
        </span>
      </span>
      <span className="ml-[11px] flex w-[20px] justify-center">
        <svg width="12" height="17" viewBox="0 0 12 17" className="block"><rect x="3.5" y="1" width="5" height="10" rx="2.5" fill="none" stroke="#1a6fc4" /><path d="M1 8a5 5 0 0 0 10 0M6 13v3" fill="none" stroke="#1a6fc4" /></svg>
      </span>
      <span className="ml-[12px] w-[20px] text-center text-[13px]">英</span>
      <span className="ml-[13px] flex w-[20px] justify-center">
        <svg width="16" height="12" viewBox="0 0 16 12" className="block" fill="none" stroke="#222"><path d="M1 4a10 10 0 0 1 14 0M3.5 6.5a6.5 6.5 0 0 1 9 0M6 9a3 3 0 0 1 4 0" /><circle cx="8" cy="11" r=".6" fill="#222" /></svg>
      </span>
      <span className="ml-[4px] flex w-[20px] justify-center">
        <svg width="16" height="13" viewBox="0 0 16 13" className="block" fill="none" stroke="#222"><path d="M1 4.5h2.5L7 1.5v10L3.5 8.5H1z" /><path d="M9.5 4.5a3 3 0 0 1 0 4M12 3a6 6 0 0 1 0 7" /></svg>
      </span>
      <span className="ml-[4px] flex w-[20px] justify-center">
        <svg width="16" height="11" viewBox="0 0 16 11" className="block"><rect x="1" y="2" width="13" height="8" fill="#333" stroke="#222" /><rect x="14" y="4" width="2" height="3" fill="#222" /><path d="M3 4h6" stroke="#fff" /></svg>
      </span>
      <div className="ml-[7px] w-[70px] text-right text-[12px] leading-[16px] tracking-[0.3px]">
        <div>15:50</div>
        <div>2024-06-23</div>
      </div>
      <span className="ml-[9px] flex w-[16px] justify-center">
        <svg width="14" height="16" viewBox="0 0 14 16" className="block"><path d="M7 1a4 4 0 0 1 4 4v4l2 3H1l2-3V5a4 4 0 0 1 4-4z" fill="#1a4fa0" /><path d="M5 13a2 2 0 0 0 4 0z" fill="#1a4fa0" /></svg>
      </span>
    </div>
  </div>
);

const StatusBar = () => (
  <div className="flex h-[22px] shrink-0 items-center border-t border-[#4a9ad8] bg-[#0072c9] pl-[8px] text-[12px] text-[#e8f4ff]">
    <span>该选项将删除选定的Outline对象。</span>
    <div className="ml-auto mr-[6px] flex items-center whitespace-nowrap">
      <svg width="16" height="14" viewBox="0 0 16 14" className="block"><path d="M0 3h12v7H5l-2 3v-3H0z" fill="#f0c840" /><text x="10" y="8" fontSize="9" fill="#111" fontWeight="700">0</text></svg>
      <span className="ml-[2px]">无消息</span>
      <span className="ml-[17px]">无选择</span>
      <svg width="10" height="5" viewBox="0 0 10 5" className="ml-[25px] block"><path d="M0 5l5-5 5 5z" fill="#fff" /></svg>
      <span className="ml-[4px]">度量标准（mm、kg、N、s、mV、mA）</span>
      <span className="ml-[19px]">度</span>
      <span className="ml-[20px]">rad</span>
      <span className="ml-[17px]">摄氏度</span>
    </div>
  </div>
);

export default function App() {
  return (
    <div className="flex h-[1080px] w-[1728px] flex-col overflow-hidden bg-white font-['Noto_Sans','Noto_Sans_CJK_SC',sans-serif]">
      <TitleBar />
      <TabRow />
      <Ribbon />
      <div className="flex min-h-0 flex-1">
        <div className="flex w-[258px] shrink-0 flex-col">
          <OutlinePanel />
          <DetailsPanel />
        </div>
        <div className="flex min-w-0 flex-1 flex-col">
          <Toolbar />
          <div className="flex min-h-0 flex-1 pl-[4px]">
            <Canvas />
          </div>
        </div>
      </div>
      <StatusBar />
      <TaskBar />
    </div>
  );
}
